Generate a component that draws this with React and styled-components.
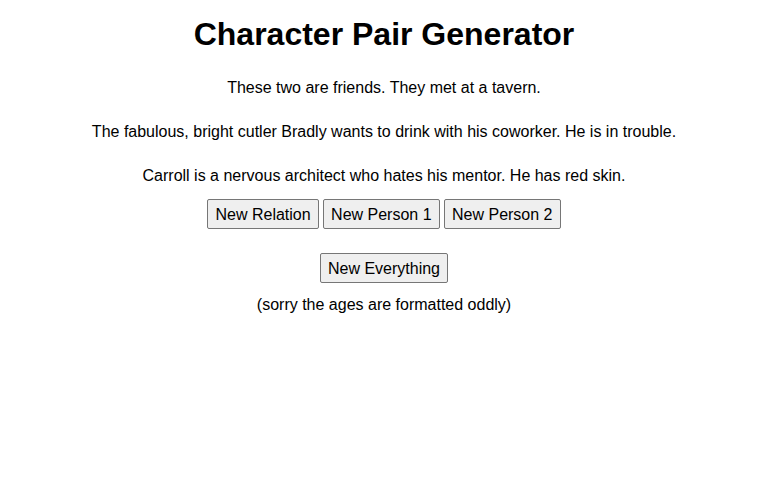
import styled, { createGlobalStyle } from "styled-components";

const GlobalStyle = createGlobalStyle`
  body {
    margin: 0;
    background: #fff;
    font-family: "Liberation Sans", Arial, sans-serif;
    color: #000;
  }
`;

const Page = styled.main`
  display: flex;
  flex-direction: column;
  align-items: center;
  padding-top: 16px;
  text-align: center;
`;

const Title = styled.h1`
  margin: 0 0 25px;
  font-size: 32px;
  font-weight: bold;
  line-height: 37px;
`;

const Line = styled.p`
  margin: 0 0 ${(p) => p.$gap ?? 24}px;
  font-size: 16px;
  line-height: 20px;
`;

const ButtonRow = styled.div`
  display: flex;
  gap: 4.45px;
  justify-content: center;
  margin-bottom: ${(p) => p.$gap || 0}px;
`;

const Button = styled.button`
  font-family: "Liberation Sans", Arial, sans-serif;
  font-size: 16px;
  line-height: 19px;
  padding: 4px 7px;
  height: 30px;
  color: #000;
  background: #efefef;
  border: 1px solid #767676;
  border-radius: 2px;
`;

const App = () => {
  return (
    <Page>
      <GlobalStyle />
      <Title>Character Pair Generator</Title>
      <Line>These two are friends. They met at a tavern.</Line>
      <Line>
        The fabulous, bright cutler Bradly wants to drink with his coworker. He
        is in trouble.
      </Line>
      <Line $gap={13}>
        Carroll is a nervous architect who hates his mentor. He has red skin.
      </Line>
      <ButtonRow $gap={24}>
        <Button>New Relation</Button>
        <Button>New Person 1</Button>
        <Button>New Person 2</Button>
      </ButtonRow>
      <ButtonRow $gap={12}>
        <Button>New Everything</Button>
      </ButtonRow>
      <Line>(sorry the ages are formatted oddly)</Line>
    </Page>
  );
};

export default App;
